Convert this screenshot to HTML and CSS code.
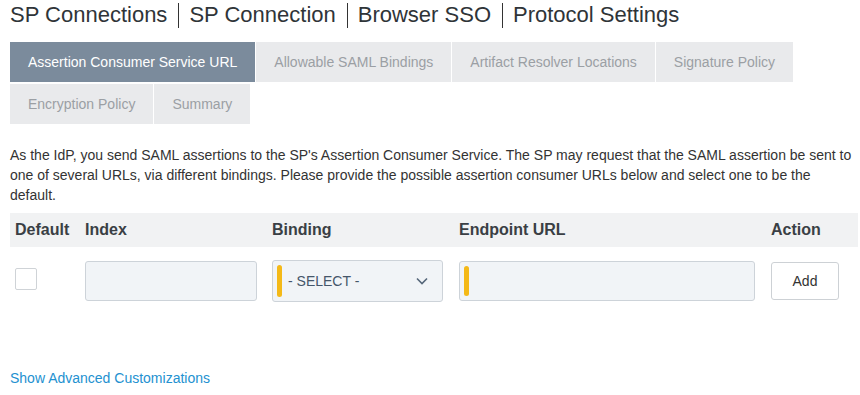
FILE: index.html
```html
<!DOCTYPE html>
<html lang="en">
<head>
    <meta charset="UTF-8">
    <meta name="viewport" content="width=device-width, initial-scale=1.0">
    <title>Protocol Settings</title>
    <link rel="stylesheet" href="styles.css">
</head>
<body>

<h1 class="crumbs">
    <span>SP Connections</span><span class="sep"></span><span>SP Connection</span><span class="sep"></span><span>Browser SSO</span><span class="sep"></span><span>Protocol Settings</span>
</h1>

<div class="tabs">
    <div class="tab active">Assertion Consumer Service URL</div>
    <div class="tab">Allowable SAML Bindings</div>
    <div class="tab">Artifact Resolver Locations</div>
    <div class="tab">Signature Policy</div>
    <div class="tab">Encryption Policy</div>
    <div class="tab">Summary</div>
</div>

<p class="intro">As the IdP, you send SAML assertions to the SP's Assertion Consumer Service. The SP may request that the SAML assertion be sent to one of several URLs, via different bindings. Please provide the possible assertion consumer URLs below and select one to be the default.</p>

<div class="grid">
    <div class="head">Default</div>
    <div class="head">Index</div>
    <div class="head">Binding</div>
    <div class="head">Endpoint URL</div>
    <div class="head">Action</div>

    <div class="cell"><span class="check"></span></div>
    <div class="cell"><div class="field index"></div></div>
    <div class="cell">
        <div class="field select">
            <span class="req"></span>
            <span class="value">- SELECT -</span>
            <svg class="chev" width="12" height="8" viewBox="0 0 12 8"><path d="M1 1.5 6 6.5 11 1.5" fill="none" stroke="#56677a" stroke-width="1.6"/></svg>
        </div>
    </div>
    <div class="cell"><div class="field endpoint"><span class="req"></span></div></div>
    <div class="cell"><button class="add">Add</button></div>
</div>

<a class="advanced" href="#">Show Advanced Customizations</a>

</body>
</html>
```

FILE: styles.css
```css
body {
    font-family: "Liberation Sans", Arial, sans-serif;
    color: #333;
    margin: 0;
    padding: 2px 2px 0 10px;
}
.crumbs {
    font-size: 22px;
    font-weight: normal;
    line-height: 26px;
    margin: 0;
    display: flex;
    align-items: center;
    color: #2f3438;
}
.sep {
    width: 1px;
    height: 25px;
    background: #333;
    margin: 0 10px 0 11px;
}
.tabs {
    display: flex;
    flex-wrap: wrap;
    column-gap: 1px;
    row-gap: 2px;
    margin-top: 14px;
}
.tab {
    height: 40px;
    line-height: 40px;
    padding: 0 18px;
    font-size: 14px;
    background-color: #e9eaec;
    color: #9b9fa4;
}
.tab.active {
    background-color: #7b8b9c;
    color: #fff;
}
.intro {
    font-size: 14px;
    line-height: 20px;
    margin: 21px 0 8px;
    color: #333;
}
.grid {
    display: grid;
    grid-template-columns: 70px 187px 187px 312px 1fr;
}
.head {
    background-color: #f1f2f3;
    font-weight: bold;
    font-size: 16px;
    line-height: 34px;
    padding-left: 5px;
    color: #3a3f44;
}
.cell {
    padding: 14px 15px 0 5px;
}
.check {
    display: block;
    width: 20px;
    height: 20px;
    border: 1px solid #cfd3d7;
    border-radius: 2px;
    margin-top: 7px;
}
.field {
    height: 38px;
    border: 1px solid #cdd3d9;
    border-radius: 3px;
    background-color: #f1f4f7;
    display: flex;
    align-items: center;
}
.index {
    width: 170px;
}
.select {
    width: 169px;
    margin-top: -1px;
    height: 40px;
}
.endpoint {
    width: 294px;
}
.req {
    width: 5px;
    height: 32px;
    border-radius: 3px;
    background-color: #f4b918;
    margin-left: 4px;
}
.endpoint .req {
    height: 30px;
}
.value {
    font-size: 14px;
    color: #45566a;
    margin-left: 6px;
    flex: 1;
}
.chev {
    margin-right: 14px;
}
.add {
    width: 68px;
    height: 38px;
    margin-top: 1px;
    background: #fff;
    border: 1px solid #cdd1d5;
    border-radius: 3px;
    font-family: inherit;
    font-size: 14px;
    color: #333;
}
.advanced {
    display: block;
    margin-top: 66px;
    font-size: 14px;
    line-height: 20px;
    color: #2391d0;
    text-decoration: none;
}
```
